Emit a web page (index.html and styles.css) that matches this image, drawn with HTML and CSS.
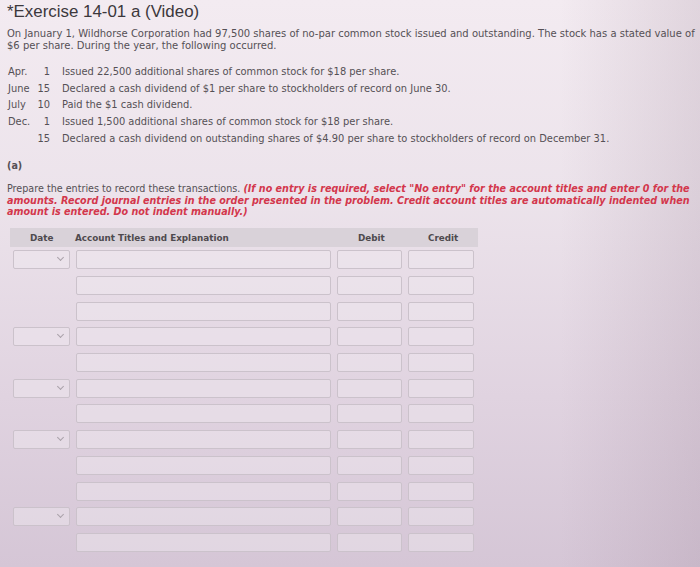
FILE: index.html
```html
<!DOCTYPE html>
<html>
<head>
<meta charset="utf-8">
<link rel="stylesheet" href="styles.css">
</head>
<body>
<div class="page">
  <h1 class="title">*Exercise 14-01 a (Video)</h1>
  <p class="intro">On January 1, Wildhorse Corporation had 97,500 shares of no-par common stock issued and outstanding. The stock has a stated value of $6 per share. During the year, the following occurred.</p>
  <div class="events">
    <div class="ev"><span class="d">Apr.</span><span class="n">1</span><span class="t">Issued 22,500 additional shares of common stock for $18 per share.</span></div>
    <div class="ev"><span class="d">June</span><span class="n">15</span><span class="t">Declared a cash dividend of $1 per share to stockholders of record on June 30.</span></div>
    <div class="ev"><span class="d">July</span><span class="n">10</span><span class="t">Paid the $1 cash dividend.</span></div>
    <div class="ev"><span class="d">Dec.</span><span class="n">1</span><span class="t">Issued 1,500 additional shares of common stock for $18 per share.</span></div>
    <div class="ev"><span class="d"></span><span class="n">15</span><span class="t">Declared a cash dividend on outstanding shares of $4.90 per share to stockholders of record on December 31.</span></div>
  </div>
  <div class="part">(a)</div>
  <div class="instr">
    <div class="line"><span>Prepare the entries to record these transactions. </span><em>(If no entry is required, select "No entry" for the account titles and enter 0 for the</em></div>
    <div class="line"><em>amounts. Record journal entries in the order presented in the problem. Credit account titles are automatically indented when</em></div>
    <div class="line"><em>amount is entered. Do not indent manually.)</em></div>
  </div>
  <div class="journal">
    <div class="head">
      <span class="h-date">Date</span>
      <span class="h-acct">Account Titles and Explanation</span>
      <span class="h-deb">Debit</span>
      <span class="h-cred">Credit</span>
    </div>
    <div class="rows">
      <div class="row"><div class="sel"><span class="chev"></span></div><div class="box"></div><div class="box"></div><div class="box"></div></div>
      <div class="row"><div></div><div class="box"></div><div class="box"></div><div class="box"></div></div>
      <div class="row"><div></div><div class="box"></div><div class="box"></div><div class="box"></div></div>
      <div class="row"><div class="sel"><span class="chev"></span></div><div class="box"></div><div class="box"></div><div class="box"></div></div>
      <div class="row"><div></div><div class="box"></div><div class="box"></div><div class="box"></div></div>
      <div class="row"><div class="sel"><span class="chev"></span></div><div class="box"></div><div class="box"></div><div class="box"></div></div>
      <div class="row"><div></div><div class="box"></div><div class="box"></div><div class="box"></div></div>
      <div class="row"><div class="sel"><span class="chev"></span></div><div class="box"></div><div class="box"></div><div class="box"></div></div>
      <div class="row"><div></div><div class="box"></div><div class="box"></div><div class="box"></div></div>
      <div class="row"><div></div><div class="box"></div><div class="box"></div><div class="box"></div></div>
      <div class="row"><div class="sel"><span class="chev"></span></div><div class="box"></div><div class="box"></div><div class="box"></div></div>
      <div class="row"><div></div><div class="box"></div><div class="box"></div><div class="box"></div></div>
    </div>
  </div>
</div>
</body>
</html>
```
FILE: styles.css
```css
html, body {
  margin: 0;
  padding: 0;
  width: 700px;
  height: 567px;
  overflow: hidden;
}
body {
  background:
    linear-gradient(to right, rgba(255,255,255,0) 0%, rgba(255,255,255,0) 80%, rgba(150,125,145,0.2) 100%),
    linear-gradient(to bottom, #f3ebf1 0%, #ece3eb 35%, #e0d3e0 70%, #d5c6d6 100%);
  font-family: "DejaVu Sans", Verdana, sans-serif;
  color: #555055;
}
.page {
  padding: 0 0 0 7px;
}
.title {
  margin: 0;
  padding-top: 1px;
  font-family: "Liberation Sans", Arial, sans-serif;
  font-weight: normal;
  font-size: 16.9px;
  line-height: 21px;
  color: #3c383c;
}
.intro {
  margin: 6px 0 0 0;
  font-size: 10px;
  line-height: 12px;
  width: 700px;
}
.events {
  margin-top: 12px;
  font-size: 9.9px;
}
.ev {
  display: flex;
  height: 16.7px;
  line-height: 16.7px;
  white-space: nowrap;
}
.ev .d {
  width: 24px;
  padding-left: 1px;
}
.ev .n {
  width: 18px;
  text-align: right;
}
.ev .t {
  margin-left: 12px;
}
.part {
  margin-top: 13px;
  font-weight: bold;
  font-size: 9.6px;
  line-height: 12px;
}
.instr {
  margin-top: 11px;
  font-size: 9.6px;
}
.instr .line {
  height: 11.3px;
  line-height: 11.3px;
  white-space: nowrap;
}
.instr em {
  color: #d3374c;
  font-weight: bold;
  font-style: italic;
}
.journal {
  margin-top: 11px;
  padding-left: 3px;
}
.head {
  width: 468px;
  height: 19px;
  background: #d9d2d9;
  display: flex;
  align-items: center;
  font-size: 8.8px;
  font-weight: bold;
  color: #4e4a4e;
}
.h-date { margin-left: 20px; width: 45px; }
.h-acct { width: 283px; }
.h-deb { width: 70px; }
.rows {
  margin-top: 3px;
  padding-left: 3px;
}
.row {
  display: grid;
  grid-template-columns: 57px 255px 65px 66px;
  column-gap: 6px;
  height: 19px;
  margin-bottom: 6.7px;
}
.box, .sel {
  border: 1px solid #cbc2cb;
  border-radius: 2px;
  background: rgba(240,232,240,0.45);
  box-sizing: border-box;
}
.sel {
  position: relative;
}
.chev {
  position: absolute;
  right: 6px;
  top: 4px;
  width: 4px;
  height: 4px;
  border-right: 1px solid #aaa2aa;
  border-bottom: 1px solid #aaa2aa;
  transform: rotate(45deg);
}
```
